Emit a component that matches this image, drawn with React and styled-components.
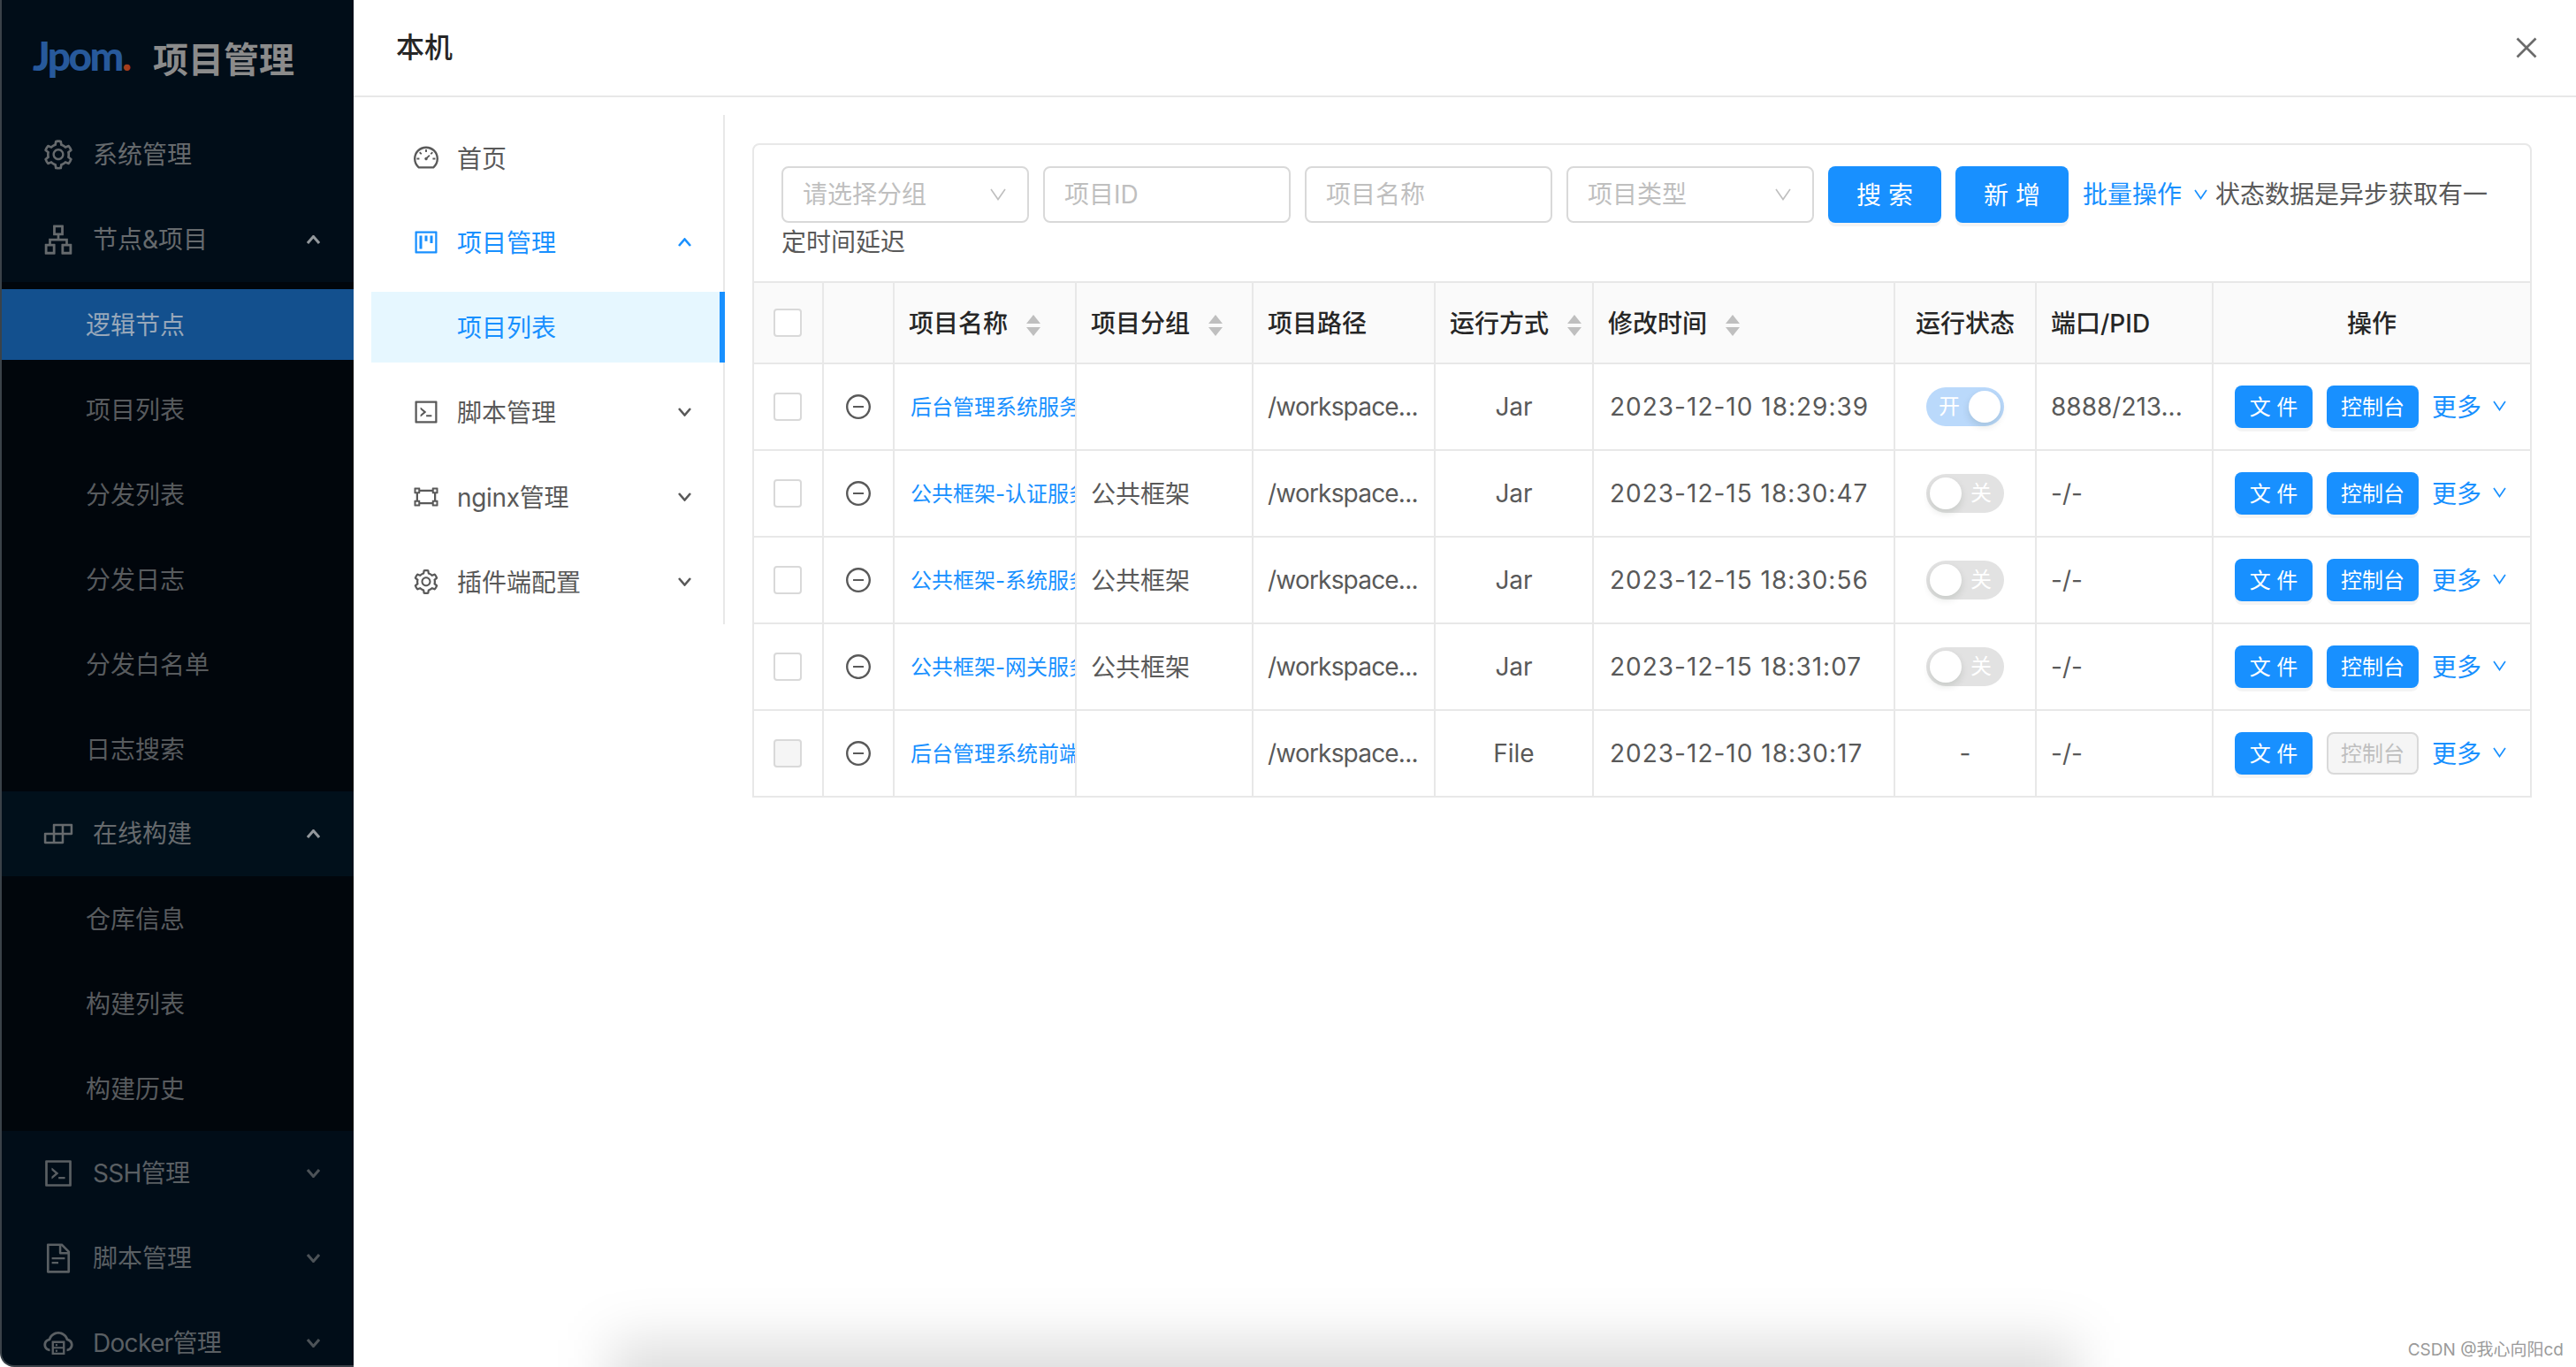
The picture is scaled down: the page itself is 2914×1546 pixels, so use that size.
import React from "react";
import styled, { createGlobalStyle } from "styled-components";
import {
  AiOutlineSetting, AiOutlineApartment, AiOutlineBuild, AiOutlineCode, AiOutlineFileText,
  AiOutlineCloudServer, AiOutlineDashboard, AiOutlineProject, AiOutlineGateway,
  AiOutlineMinusCircle, AiOutlineClose,
} from "react-icons/ai";

const FONT = `Inter, "Noto Sans CJK SC", sans-serif`;

const Global = createGlobalStyle`
  html, body { margin: 0; padding: 0; background: #fff; overflow: hidden; }
  * { box-sizing: border-box; }
  body { font-family: ${FONT}; font-size: 28px; color: #595959; }
`;

const Page = styled.div`
  position: relative; display: flex; width: 2914px; height: 1546px; overflow: hidden; background: #fff;
`;

/* dark application sidebar */
const Side = styled.aside`
  width: 400px; height: 1546px; flex: none; display: flex; flex-direction: column; overflow: hidden;
  background: #010d18; border-left: 2px solid #3a4249; border-bottom: 2px solid #3a4249;
  border-bottom-left-radius: 16px;
`;
const Brand = styled.div`
  height: 127px; flex: none; display: flex; align-items: center; padding: 10px 0 0 35px;
`;
const LogoMark = styled.span`
  width: 136px; font-family: Lato, sans-serif; font-weight: 900; font-size: 46px; letter-spacing: -2.5px;
  line-height: 1; color: #27599b; margin-top: -12px;
`;
const LogoDot = styled.span`color: #a53d1c;`;
const BrandTitle = styled.span`
  font-size: 40px; font-weight: 700; color: #8b8b8b; line-height: 1; margin-top: -2px;
`;
const SideRow = styled.div`
  height: 96px; flex: none; display: flex; align-items: center; padding-left: 48px; padding-right: 38px;
  background: ${(p) => (p.$open ? "#01101b" : "transparent")};
  color: ${(p) => (p.$dim ? "#5a5f63" : "#666a6d")};
`;
const SideIcon = styled.span`
  width: 32px; height: 32px; margin-right: 23px; display: flex; align-items: center; justify-content: center; font-size: 38px;
  svg { flex: none; }
`;
const SideLabel = styled.span`flex: 1; line-height: 40px; letter-spacing: ${(p) => (p.$latin ? "-0.7px" : "0")};`;
const SubGroup = styled.div`
  flex: none; display: flex; flex-direction: column; background: #01060c;
`;
const SubRow = styled.div`
  height: 80px; margin: 8px 0; padding: 0 0 2px 95px; display: flex; align-items: center;
  background: ${(p) => (p.$active ? "#13508e" : "transparent")};
  color: ${(p) => (p.$active ? "#98a8ba" : "#585b5e")};
`;

/* drawer */
const Drawer = styled.main`flex: 1; min-width: 0; display: flex; flex-direction: column;`;
const DrawerHead = styled.header`
  height: 110px; flex: none; display: flex; align-items: center; justify-content: space-between;
  padding: 0 39px 0 48px; border-bottom: 2px solid #e8e8e8;
`;
const DrawerTitle = styled.h1`
  margin: 0; font-size: 32px; font-weight: 500; color: #262626; line-height: 44px;
`;
const CloseBtn = styled.span`display: flex; font-size: 34px; color: #6b6b6b;`;
const DrawerBody = styled.div`flex: 1; display: flex; align-items: flex-start; padding: 20px 0 0 20px;`;

/* inner menu */
const Menu = styled.nav`width: 400px; flex: none; display: flex; flex-direction: column; border-right: 2px solid #e8e8e8;`;
const MenuRow = styled.div`
  position: relative; height: 80px; flex: none; margin: 8px -2px 8px 0; display: flex; align-items: center; padding: 0 38px 0 48px;
  color: ${(p) => (p.$on ? "#1890ff" : "#595959")};
  background: ${(p) => (p.$selected ? "#e6f7ff" : "transparent")};
  border-right: ${(p) => (p.$selected ? "6px solid #1890ff" : "0")};
`;
const MenuIcon = styled.span`
  width: 28px; margin-right: 21px; display: flex; justify-content: center; font-size: 32px;
  svg { flex: none; }
`;
const MenuLabel = styled.span`
  flex: 1; padding-left: ${(p) => (p.$sub ? "49px" : "0")}; margin-bottom: ${(p) => (p.$flat ? "0" : "2px")};
  letter-spacing: ${(p) => (p.$latin ? "-0.3px" : "0")};
`;

/* project card */
const Card = styled.section`
  width: 2013px; margin: 32px 0 0 31px; border: 2px solid #e8e8e8; border-top-left-radius: 8px; border-top-right-radius: 8px;
`;
const Toolbar = styled.div`
  height: 156px; padding: 24px 32px 0 31px; border-bottom: 2px solid #e8e8e8; line-height: 40px; color: #595959;
`;
const Field = styled.span`
  display: inline-flex; vertical-align: middle; align-items: center; justify-content: space-between;
  width: 280px; height: 64px; margin-right: 16px; padding: 0 24px 0 22px; border: 2px solid #d9d9d9; border-radius: 8px;
  color: #bfbfbf; background: #fff; font-size: 28px;
`;
const TextField = styled.input`
  display: inline-block; vertical-align: middle;
  width: 280px; height: 64px; margin-right: 16px; padding: 0 22px; border: 2px solid #d9d9d9; border-radius: 8px;
  font: 28px ${FONT}; outline: none; background: #fff;
  &::placeholder { color: #bfbfbf; opacity: 1; }
`;
const PrimaryBtn = styled.button`
  display: inline-block; vertical-align: middle; width: 128px; height: 64px; margin-right: 16px; padding: 0 0 2px;
  border: 0; border-radius: 8px; background: #1890ff; color: #fff; font: 28px ${FONT};
  box-shadow: 0 4px 0 rgba(0,0,0,.045);
`;
const BatchLink = styled.span`
  display: inline-flex; vertical-align: middle; align-items: center; height: 64px; width: 150px; color: #1890ff; gap: 14px;
`;
const Note = styled.span`vertical-align: middle;`;

const COLS = "79px 80px 206px 200px 206px 179px 341px 160px 200px 358px";
const Row = styled.div`
  display: grid; grid-template-columns: ${COLS}; height: ${(p) => (p.$head ? "92px" : "98px")};
  border-bottom: 2px solid #e8e8e8; background: ${(p) => (p.$head ? "#fafafa" : "#fff")};
  color: ${(p) => (p.$head ? "#262626" : "#595959")}; font-weight: ${(p) => (p.$head ? 500 : 400)};
  &:last-child { height: 96px; border-bottom: 0; }
`;
const Cell = styled.div`
  display: flex; align-items: center; min-width: 0; overflow: hidden; white-space: nowrap;
  padding: 0 16px; border-right: 2px solid #e8e8e8;
  justify-content: ${(p) => (p.$center ? "center" : "flex-start")};
  &:last-child { border-right: 0; }
`;
const HeadCell = styled(Cell)`padding-bottom: 3px;`;
const CheckCell = styled(Cell)`padding: 0 18px 0 16px;`;
const ActionCell = styled(Cell)`padding: 0 0 0 24px; gap: 16px;`;
const Sorter = styled.svg`width: 16px; height: 24px; flex: none; margin-left: 21px; margin-top: 8px; fill: #bfbfbf;`;
const Check = styled.span`
  width: 32px; height: 32px; flex: none; border: 2px solid #d9d9d9; border-radius: 4px; background: ${(p) => (p.$disabled ? "#f5f5f5" : "#fff")};
`;
const Expand = styled.span`display: flex; font-size: 32px; color: #595959;`;
const NameLink = styled.span`font-size: 24px; color: #1890ff; margin: 0 -16px 3px 2px;`;
const GroupText = styled.span`margin-bottom: 2px;`;
const PathText = styled.span`letter-spacing: -0.8px;`;
const TimeText = styled.span`letter-spacing: 1px; margin-left: 2px;`;
const Switch = styled.span`
  position: relative; display: block; width: 88px; height: 44px; border-radius: 22px;
  background: ${(p) => (p.$on ? "#bad9fb" : "#e2e2e2")}; color: #fff; font-size: 24px; line-height: 44px;
  padding: ${(p) => (p.$on ? "0 0 0 14px" : "0 0 0 50px")};
`;
const Knob = styled.span`
  position: absolute; top: 4px; left: ${(p) => (p.$on ? "48px" : "4px")}; width: 36px; height: 36px; border-radius: 50%;
  background: #fff; box-shadow: 0 4px 8px rgba(0,35,11,.12);
`;
const ActionBtn = styled.button`
  flex: none; width: ${(p) => p.$w}; height: 48px; padding: 0 0 4px; border-radius: 8px; font: 24px ${FONT};
  border: ${(p) => (p.disabled ? "2px solid #d9d9d9" : "0")};
  background: ${(p) => (p.disabled ? "#f5f5f5" : "#1890ff")};
  color: ${(p) => (p.disabled ? "#bfbfbf" : "#fff")};
  box-shadow: ${(p) => (p.disabled ? "none" : "0 4px 0 rgba(0,0,0,.045)")};
`;
const More = styled.span`display: inline-flex; align-items: center; gap: 13px; color: #1890ff; margin: 0 0 2px -1px;`;
const ChevronSvg = styled.svg`
  flex: none; width: ${(p) => p.$w}px; height: ${(p) => p.$h}px; fill: none; stroke: ${(p) => p.$c || "currentColor"};
  stroke-width: ${(p) => p.$s};
`;

/* things lying over the page */
const BottomGlow = styled.div`
  position: absolute; left: 690px; top: 1516px; width: 1660px; height: 300px; background: rgba(0,0,0,.13); filter: blur(30px); pointer-events: none;
`;
const Watermark = styled.span`
  position: absolute; right: 14px; bottom: 6px; font-size: 19px; line-height: 26px; color: #9a9a9a; white-space: nowrap;
`;

const Chevron = ({ up, w = 15, h = 10, s = 2, c }) => (
  <ChevronSvg viewBox={`0 0 ${w} ${h}`} $w={w} $h={h} $s={s} $c={c}>
    <polyline points={up ? `1,${h - 1} ${w / 2},1.5 ${w - 1},${h - 1}` : `1,1 ${w / 2},${h - 1.5} ${w - 1},1`} />
  </ChevronSvg>
);

const Sort = () => (
  <Sorter viewBox="0 0 16 24">
    <polygon points="8,0 16,10 0,10" />
    <polygon points="0,14 16,14 8,24" />
  </Sorter>
);

const sideBefore = [
  { icon: <AiOutlineSetting />, label: "系统管理" },
];
const nodeSub = ["逻辑节点", "项目列表", "分发列表", "分发日志", "分发白名单", "日志搜索"];
const buildSub = ["仓库信息", "构建列表", "构建历史"];
const sideAfter = [
  { icon: <AiOutlineCode />, label: "SSH管理", latin: true },
  { icon: <AiOutlineFileText />, label: "脚本管理" },
  { icon: <AiOutlineCloudServer />, label: "Docker管理", latin: true },
];
const innerMenu = [
  { icon: <AiOutlineDashboard />, label: "首页", flat: true },
  { icon: <AiOutlineProject />, label: "项目管理", on: true, up: true },
  { label: "项目列表", on: true, selected: true, sub: true },
  { icon: <AiOutlineCode />, label: "脚本管理", arrow: true },
  { icon: <AiOutlineGateway />, label: "nginx管理", arrow: true, latin: true },
  { icon: <AiOutlineSetting />, label: "插件端配置", arrow: true },
];
const rows = [
  { name: "后台管理系统服务端", group: "", type: "Jar", time: "2023-12-10 18:29:39", sw: "on", port: "8888/213..." },
  { name: "公共框架-认证服务端", group: "公共框架", type: "Jar", time: "2023-12-15 18:30:47", sw: "off", port: "-/-" },
  { name: "公共框架-系统服务端", group: "公共框架", type: "Jar", time: "2023-12-15 18:30:56", sw: "off", port: "-/-" },
  { name: "公共框架-网关服务端", group: "公共框架", type: "Jar", time: "2023-12-15 18:31:07", sw: "off", port: "-/-" },
  { name: "后台管理系统前端项目", group: "", type: "File", time: "2023-12-10 18:30:17", sw: "none", port: "-/-", locked: true },
];

export default function App() {
  return (
    <Page>
      <Global />
      <Side>
        <Brand>
          <LogoMark>Jpom<LogoDot>.</LogoDot></LogoMark>
          <BrandTitle>项目管理</BrandTitle>
        </Brand>
        {sideBefore.map((r) => (
          <SideRow key={r.label}>
            <SideIcon>{r.icon}</SideIcon>
            <SideLabel>{r.label}</SideLabel>
          </SideRow>
        ))}
        <SideRow>
          <SideIcon><AiOutlineApartment /></SideIcon>
          <SideLabel>节点&amp;项目</SideLabel>
          <Chevron up s={3} c="#92979b" />
        </SideRow>
        <SubGroup>
          {nodeSub.map((t, i) => <SubRow key={t} $active={i === 0}>{t}</SubRow>)}
        </SubGroup>
        <SideRow $open>
          <SideIcon><AiOutlineBuild /></SideIcon>
          <SideLabel>在线构建</SideLabel>
          <Chevron up s={3} c="#92979b" />
        </SideRow>
        <SubGroup>
          {buildSub.map((t) => <SubRow key={t}>{t}</SubRow>)}
        </SubGroup>
        {sideAfter.map((r) => (
          <SideRow key={r.label} $dim>
            <SideIcon>{r.icon}</SideIcon>
            <SideLabel $latin={r.latin}>{r.label}</SideLabel>
            <Chevron s={3} c="#4c5257" />
          </SideRow>
        ))}
      </Side>

      <Drawer>
        <DrawerHead>
          <DrawerTitle>本机</DrawerTitle>
          <CloseBtn><AiOutlineClose /></CloseBtn>
        </DrawerHead>
        <DrawerBody>
          <Menu>
            {innerMenu.map((m) => (
              <MenuRow key={m.label} $on={m.on} $selected={m.selected}>
                {m.icon && <MenuIcon>{m.icon}</MenuIcon>}
                <MenuLabel $sub={m.sub} $flat={m.flat} $latin={m.latin}>{m.label}</MenuLabel>
                {m.up && <Chevron up s={2.6} />}
                {m.arrow && <Chevron s={2.6} />}
              </MenuRow>
            ))}
          </Menu>
          <Card>
            <Toolbar>
              <Field>请选择分组<Chevron w={18} h={14} s={1.6} c="#bfbfbf" /></Field>
              <TextField placeholder="项目ID" />
              <TextField placeholder="项目名称" />
              <Field>项目类型<Chevron w={18} h={14} s={1.6} c="#bfbfbf" /></Field>
              <PrimaryBtn>搜 索</PrimaryBtn>
              <PrimaryBtn>新 增</PrimaryBtn>
              <BatchLink>批量操作<Chevron h={12} s={1.7} /></BatchLink>
              <Note>状态数据是异步获取有一定时间延迟</Note>
            </Toolbar>
            <Row $head>
              <CheckCell $center><Check /></CheckCell>
              <Cell />
              <HeadCell>项目名称<Sort /></HeadCell>
              <HeadCell>项目分组<Sort /></HeadCell>
              <HeadCell>项目路径</HeadCell>
              <HeadCell>运行方式<Sort /></HeadCell>
              <HeadCell>修改时间<Sort /></HeadCell>
              <HeadCell $center>运行状态</HeadCell>
              <HeadCell>端口/PID</HeadCell>
              <HeadCell $center>操作</HeadCell>
            </Row>
            {rows.map((r) => (
              <Row key={r.time}>
                <CheckCell $center><Check $disabled={r.locked} /></CheckCell>
                <Cell $center><Expand><AiOutlineMinusCircle /></Expand></Cell>
                <Cell><NameLink>{r.name}</NameLink></Cell>
                <Cell><GroupText>{r.group}</GroupText></Cell>
                <Cell><PathText>/workspace...</PathText></Cell>
                <Cell $center>{r.type}</Cell>
                <Cell><TimeText>{r.time}</TimeText></Cell>
                <Cell $center>
                  {r.sw === "none" ? "-" : (
                    <Switch $on={r.sw === "on"}>
                      {r.sw === "on" ? "开" : "关"}
                      <Knob $on={r.sw === "on"} />
                    </Switch>
                  )}
                </Cell>
                <Cell>{r.port}</Cell>
                <ActionCell>
                  <ActionBtn $w="88px">文 件</ActionBtn>
                  <ActionBtn $w="104px" disabled={r.locked}>控制台</ActionBtn>
                  <More>更多<Chevron h={12} s={1.7} /></More>
                </ActionCell>
              </Row>
            ))}
          </Card>
        </DrawerBody>
      </Drawer>
      <BottomGlow />
      <Watermark>CSDN @我心向阳cd</Watermark>
    </Page>
  );
}
